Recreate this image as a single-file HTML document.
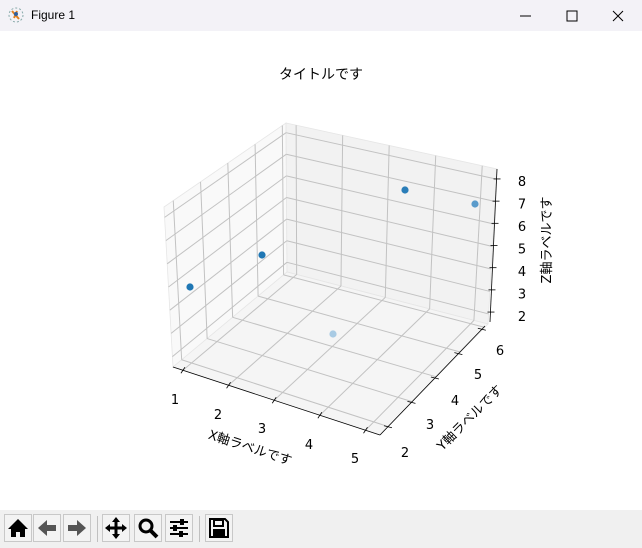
<!DOCTYPE html>
<html><head><meta charset="utf-8"><style>
body{margin:0;width:642px;height:548px;overflow:hidden;background:#fff;font-family:"Liberation Sans","Noto Sans CJK JP",sans-serif;position:relative}
.tb{position:absolute;left:0;top:0;width:642px;height:31px;background:#f3f2f7}
.tb .t{position:absolute;left:31px;top:8px;font-size:12px;color:#000}
.tool{position:absolute;left:0;top:510px;width:642px;height:38px;background:#f0f0f0}
.btn{position:absolute;top:4px;width:28px;height:28px;border:1px solid #c8c8c8;background:#f3f3f3;box-sizing:border-box}
.sep{position:absolute;top:6px;width:1px;height:26px;background:#c0c0c0}
svg text{font-family:"DejaVu Sans","Noto Sans CJK JP",sans-serif}
</style></head><body>
<div class="tb">
<svg style="position:absolute;left:8px;top:7px" width="16" height="16"><circle cx="8" cy="8" r="7" fill="none" stroke="#8aa" stroke-dasharray="2 2"/><path d="M4 4 L11 12 M9 4 L6 11" stroke="#e08020" stroke-width="2"/><circle cx="8" cy="7" r="2" fill="#3060a0"/></svg>
<div class="t">Figure 1</div>
<svg style="position:absolute;left:518px;top:9px" width="115" height="14"><line x1="2" y1="7" x2="13" y2="7" stroke="#000"/><rect x="49" y="2" width="10" height="10" fill="none" stroke="#000"/><path d="M95 2 L105 12 M105 2 L95 12" stroke="#000"/></svg>
</div>
<svg id="p" width="642" height="548" style="position:absolute;left:0;top:0">
<text x="321" y="79" text-anchor="middle" font-size="14">タイトルです</text>
</svg>
<div class="tool">
<div class="btn" style="left:4px"><svg width="26" height="26"><path d="M13 4 L3 14 H6 V22 H11 V17 H15 V22 H20 V14 H23 Z" fill="#000"/></svg></div>
<div class="btn" style="left:33px"><svg width="26" height="26"><path d="M4 13 L13 5 V10 H22 V16 H13 V21 Z" fill="#555"/></svg></div>
<div class="btn" style="left:63px"><svg width="26" height="26"><path d="M22 13 L13 5 V10 H4 V16 H13 V21 Z" fill="#555"/></svg></div>
<div class="sep" style="left:97px"></div>
<div class="btn" style="left:102px"><svg width="26" height="26"><path d="M13 2 L17 7 H14.5 V11.5 H19 V9 L24 13 L19 17 V14.5 H14.5 V19 H17 L13 24 L9 19 H11.5 V14.5 H7 V17 L2 13 L7 9 V11.5 H11.5 V7 H9 Z" fill="#000"/></svg></div>
<div class="btn" style="left:134px"><svg width="26" height="26"><circle cx="11" cy="11" r="6" fill="none" stroke="#000" stroke-width="3"/><line x1="15" y1="15" x2="22" y2="22" stroke="#000" stroke-width="4"/></svg></div>
<div class="btn" style="left:165px"><svg width="26" height="26"><path d="M4 7H22M4 13H22M4 19H22" stroke="#000" stroke-width="2"/><rect x="14" y="4" width="4" height="6" fill="#000"/><rect x="7" y="10" width="4" height="6" fill="#000"/><rect x="13" y="16" width="4" height="6" fill="#000"/></svg></div>
<div class="sep" style="left:199px"></div>
<div class="btn" style="left:205px"><svg width="26" height="26"><path d="M4 4 H19 L22 7 V22 H4 Z" fill="none" stroke="#000" stroke-width="2"/><rect x="8" y="5" width="9" height="6" fill="none" stroke="#000" stroke-width="2"/><rect x="7" y="14" width="12" height="7" fill="#000"/></svg></div>
</div>
<script>
var s=document.getElementById('p'),NS='http://www.w3.org/2000/svg';
function el(t,a,txt){var e=document.createElementNS(NS,t);for(var k in a)e.setAttribute(k,a[k]);if(txt)e.textContent=txt;s.appendChild(e);return e;}
var C={'000':[173,367],'100':[380,435],'110':[488,324],'010':[287,272],'001':[164,207],'101':[382,269],'111':[497,169],'011':[286,123]};
function P(u,v,w){var r=[0,0];for(var a=0;a<2;a++)for(var b=0;b<2;b++)for(var c=0;c<2;c++){var f=(a?u:1-u)*(b?v:1-v)*(c?w:1-w);var p=C[''+a+b+c];r[0]+=f*p[0];r[1]+=f*p[1];}return r;}
function poly(pts,fill){el('polygon',{points:pts.map(function(p){return p.join(',')}).join(' '),fill:fill,stroke:'#e6e6e6','stroke-width':0.8});}
function ln(a,b,c,w){el('line',{x1:a[0],y1:a[1],x2:b[0],y2:b[1],stroke:c,'stroke-width':w||0.8});}
poly([P(0,0,0),P(0,1,0),P(0,1,1),P(0,0,1)],'#f9f9f9');
poly([P(0,1,0),P(1,1,0),P(1,1,1),P(0,1,1)],'#f2f2f2');
poly([P(0,0,0),P(1,0,0),P(1,1,0),P(0,1,0)],'#f5f5f5');
var g='#c2c2c2';
for(var x=1;x<=5;x++){var u=0.048+(x-1)*0.2205;ln(P(u,0,0),P(u,1,0),g,1);ln(P(u,1,0),P(u,1,1),g,1);}
for(var y=2;y<=6;y++){var v=0.076+(y-2)*0.2235;ln(P(0,v,0),P(1,v,0),g,1);ln(P(0,v,0),P(0,v,1),g,1);}
for(var z=2;z<=8;z++){var w=0.065+(z-2)*0.145;ln(P(0,0,w),P(0,1,w),g,1);ln(P(0,1,w),P(1,1,w),g,1);}
ln([173,367],[380,435],'#000');ln([380,435],[485,326],'#000');ln([490,322],[497,169],'#000');
for(var x=1;x<=5;x++){var u=0.048+(x-1)*0.2205;var a=[173+207*u,367+68*u];ln([a[0]-2,a[1]+3],[a[0]+2,a[1]-3],'#000');}
for(var y=2;y<=6;y++){var v=0.076+(y-2)*0.2235;var a=[380+105*v,435-109*v];ln([a[0]-4,a[1]-1],[a[0]+4,a[1]+1],'#000');}
for(var z=2;z<=8;z++){var w=0.065+(z-2)*0.145;var a=[490+7*w,322-153*w];ln([a[0]-3,a[1]],[a[0]+4,a[1]],'#000');}
var xl=[[175,399],[218,414],[262,428],[309,444],[355,458]];xl.forEach(function(p,i){el('text',{x:p[0],y:p[1]+5,'text-anchor':'middle','font-size':13},''+(i+1));});
var yl=[[405,452],[430,424],[455,400],[478,374],[500,350]];yl.forEach(function(p,i){el('text',{x:p[0],y:p[1]+5,'text-anchor':'middle','font-size':13},''+(i+2));});
for(var z=2;z<=8;z++){el('text',{x:522,y:316-(z-2)*22.5+5,'text-anchor':'middle','font-size':13},''+z);}
el('text',{x:250,y:452,'text-anchor':'middle','font-size':13,transform:'rotate(18 250 448)'},'X軸ラベルです');
el('text',{x:470,y:422,'text-anchor':'middle','font-size':13,transform:'rotate(-45 470 418)'},'Y軸ラベルです');
el('text',{x:547,y:244,'text-anchor':'middle','font-size':13,transform:'rotate(-90 547 240)'},'Z軸ラベルです');
[[190,287,'#1f77b4'],[262,255,'#1f77b4'],[405,190,'#2a7db8'],[475,204,'#5a9bcb'],[333,334,'#a9cbe4']].forEach(function(d){el('circle',{cx:d[0],cy:d[1],r:3.6,fill:d[2]});});
</script>
</body></html>
